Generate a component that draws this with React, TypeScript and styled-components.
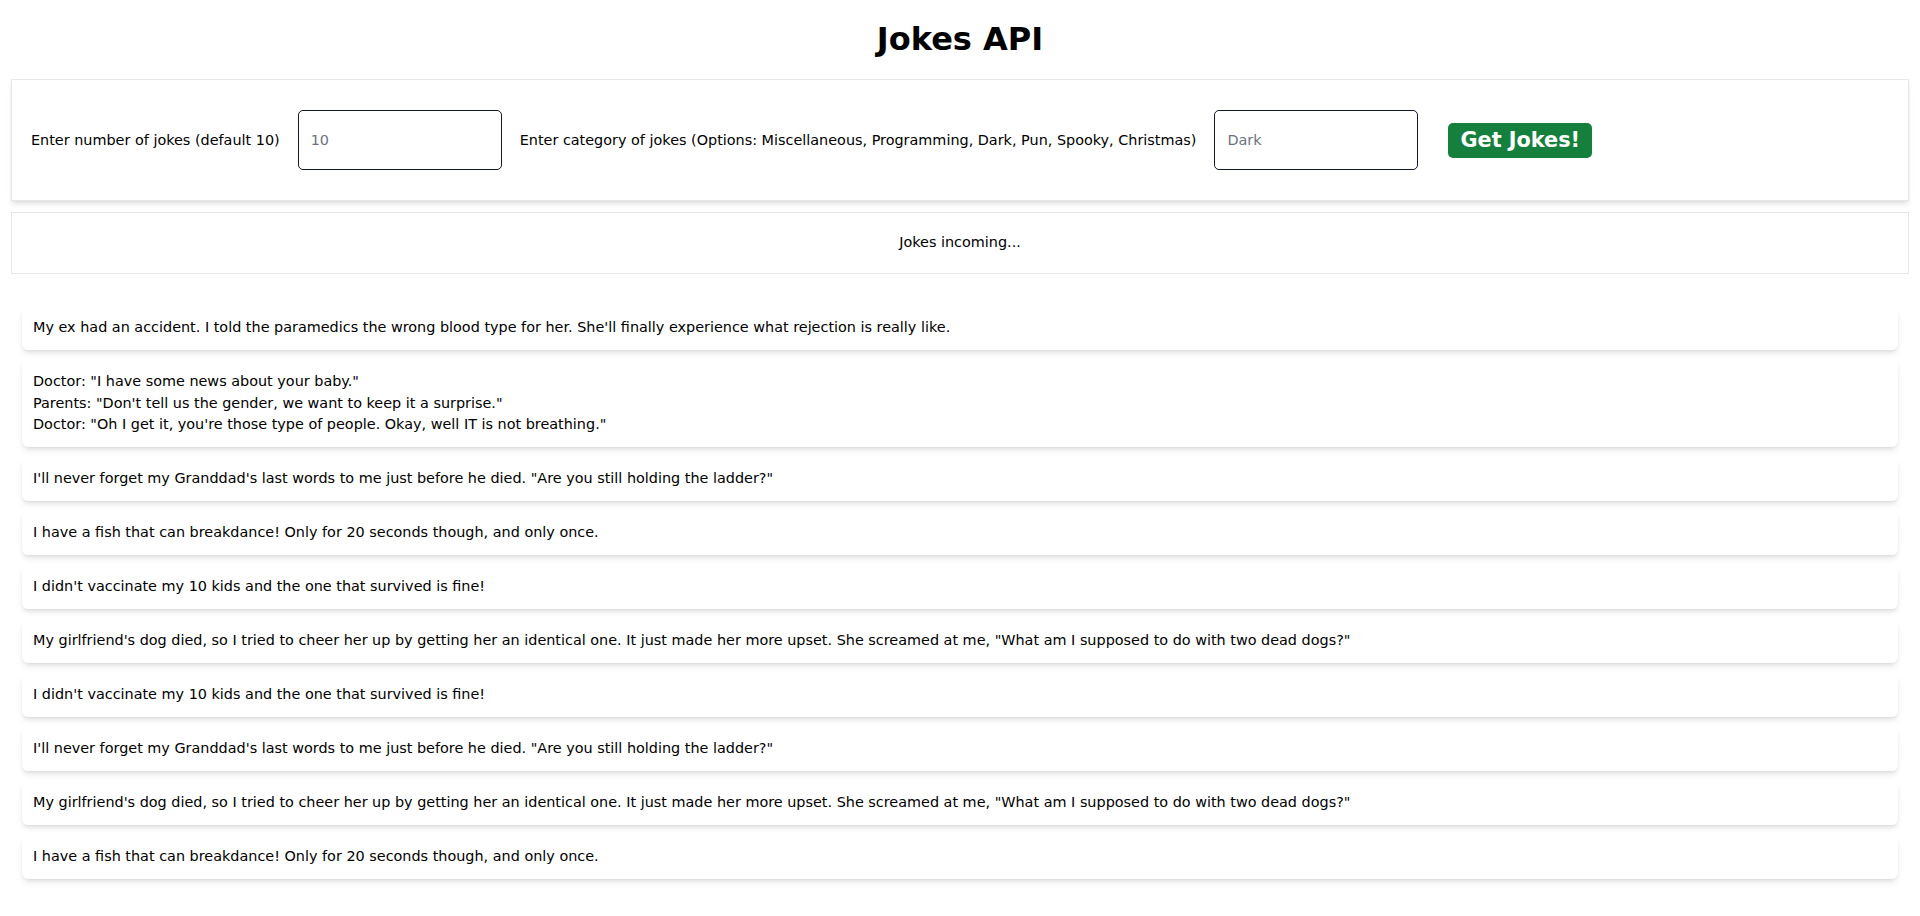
import { FC } from 'react'
import styled, { createGlobalStyle } from 'styled-components'

const GlobalStyle = createGlobalStyle`
  body {
    margin: 0;
    background: #ffffff;
    color: #000000;
    font-family: 'DejaVu Sans', 'Noto Sans', sans-serif;
    font-size: 14.4px;
  }
  * {
    box-sizing: border-box;
  }
`

const Page = styled.div`
  padding: 0 11px 40px;
`

const Title = styled.h1`
  margin: 21px 0;
  font-size: 32px;
  font-weight: 700;
  text-align: center;
  line-height: 1.164;
`

const FormPanel = styled.div`
  display: flex;
  align-items: center;
  gap: 18px;
  padding: 30px 19px;
  background: #ffffff;
  border: 1px solid #e5e7eb;
  box-shadow: 0 4px 6px -1px rgba(0, 0, 0, 0.1), 0 2px 4px -2px rgba(0, 0, 0, 0.1);
`

const Label = styled.label`
  font-size: 14.4px;
  white-space: nowrap;
`

const TextInput = styled.input`
  width: 204px;
  height: 60px;
  padding: 0 12px;
  border: 1px solid #111827;
  border-radius: 5px;
  font-family: inherit;
  font-size: 14.4px;
  color: #111827;
  background: #ffffff;

  &::placeholder {
    color: #6b7280;
  }
`

const SubmitButton = styled.button`
  margin-left: 12px;
  height: 35px;
  padding: 0 12px;
  border: none;
  border-radius: 5px;
  background: #15803d;
  color: #ffffff;
  font-family: inherit;
  font-size: 20.8px;
  font-weight: 700;
  cursor: pointer;
`

const StatusPanel = styled.div`
  margin-top: 11px;
  padding: 19px;
  border: 1px solid #e5e7eb;
  text-align: center;
  line-height: 1.5;
`

const JokeList = styled.div`
  display: flex;
  flex-direction: column;
  gap: 10px;
  margin-top: 32px;
  padding: 0 11px;
`

const JokeCard = styled.div`
  padding: 11.2px 11px;
  background: #ffffff;
  border-radius: 6px;
  box-shadow: 0 4px 6px -1px rgba(0, 0, 0, 0.1), 0 2px 4px -2px rgba(0, 0, 0, 0.1);
  line-height: 1.5;
  white-space: pre-line;
`

const jokes = [
  "My ex had an accident. I told the paramedics the wrong blood type for her. She'll finally experience what rejection is really like.",
  'Doctor: "I have some news about your baby."\nParents: "Don\'t tell us the gender, we want to keep it a surprise."\nDoctor: "Oh I get it, you\'re those type of people. Okay, well IT is not breathing."',
  'I\'ll never forget my Granddad\'s last words to me just before he died. "Are you still holding the ladder?"',
  'I have a fish that can breakdance! Only for 20 seconds though, and only once.',
  "I didn't vaccinate my 10 kids and the one that survived is fine!",
  'My girlfriend\'s dog died, so I tried to cheer her up by getting her an identical one. It just made her more upset. She screamed at me, "What am I supposed to do with two dead dogs?"',
  "I didn't vaccinate my 10 kids and the one that survived is fine!",
  'I\'ll never forget my Granddad\'s last words to me just before he died. "Are you still holding the ladder?"',
  'My girlfriend\'s dog died, so I tried to cheer her up by getting her an identical one. It just made her more upset. She screamed at me, "What am I supposed to do with two dead dogs?"',
  'I have a fish that can breakdance! Only for 20 seconds though, and only once.',
]

const App: FC = () => {
  return (
    <Page>
      <GlobalStyle />
      <Title>Jokes API</Title>
      <FormPanel>
        <Label htmlFor="amount">Enter number of jokes (default 10)</Label>
        <TextInput id="amount" placeholder="10" />
        <Label htmlFor="category">
          Enter category of jokes (Options: Miscellaneous, Programming, Dark, Pun, Spooky, Christmas)
        </Label>
        <TextInput id="category" placeholder="Dark" />
        <SubmitButton>Get Jokes!</SubmitButton>
      </FormPanel>
      <StatusPanel>Jokes incoming...</StatusPanel>
      <JokeList>
        {jokes.map((joke, i) => (
          <JokeCard key={i}>{joke}</JokeCard>
        ))}
      </JokeList>
    </Page>
  )
}

export default App
